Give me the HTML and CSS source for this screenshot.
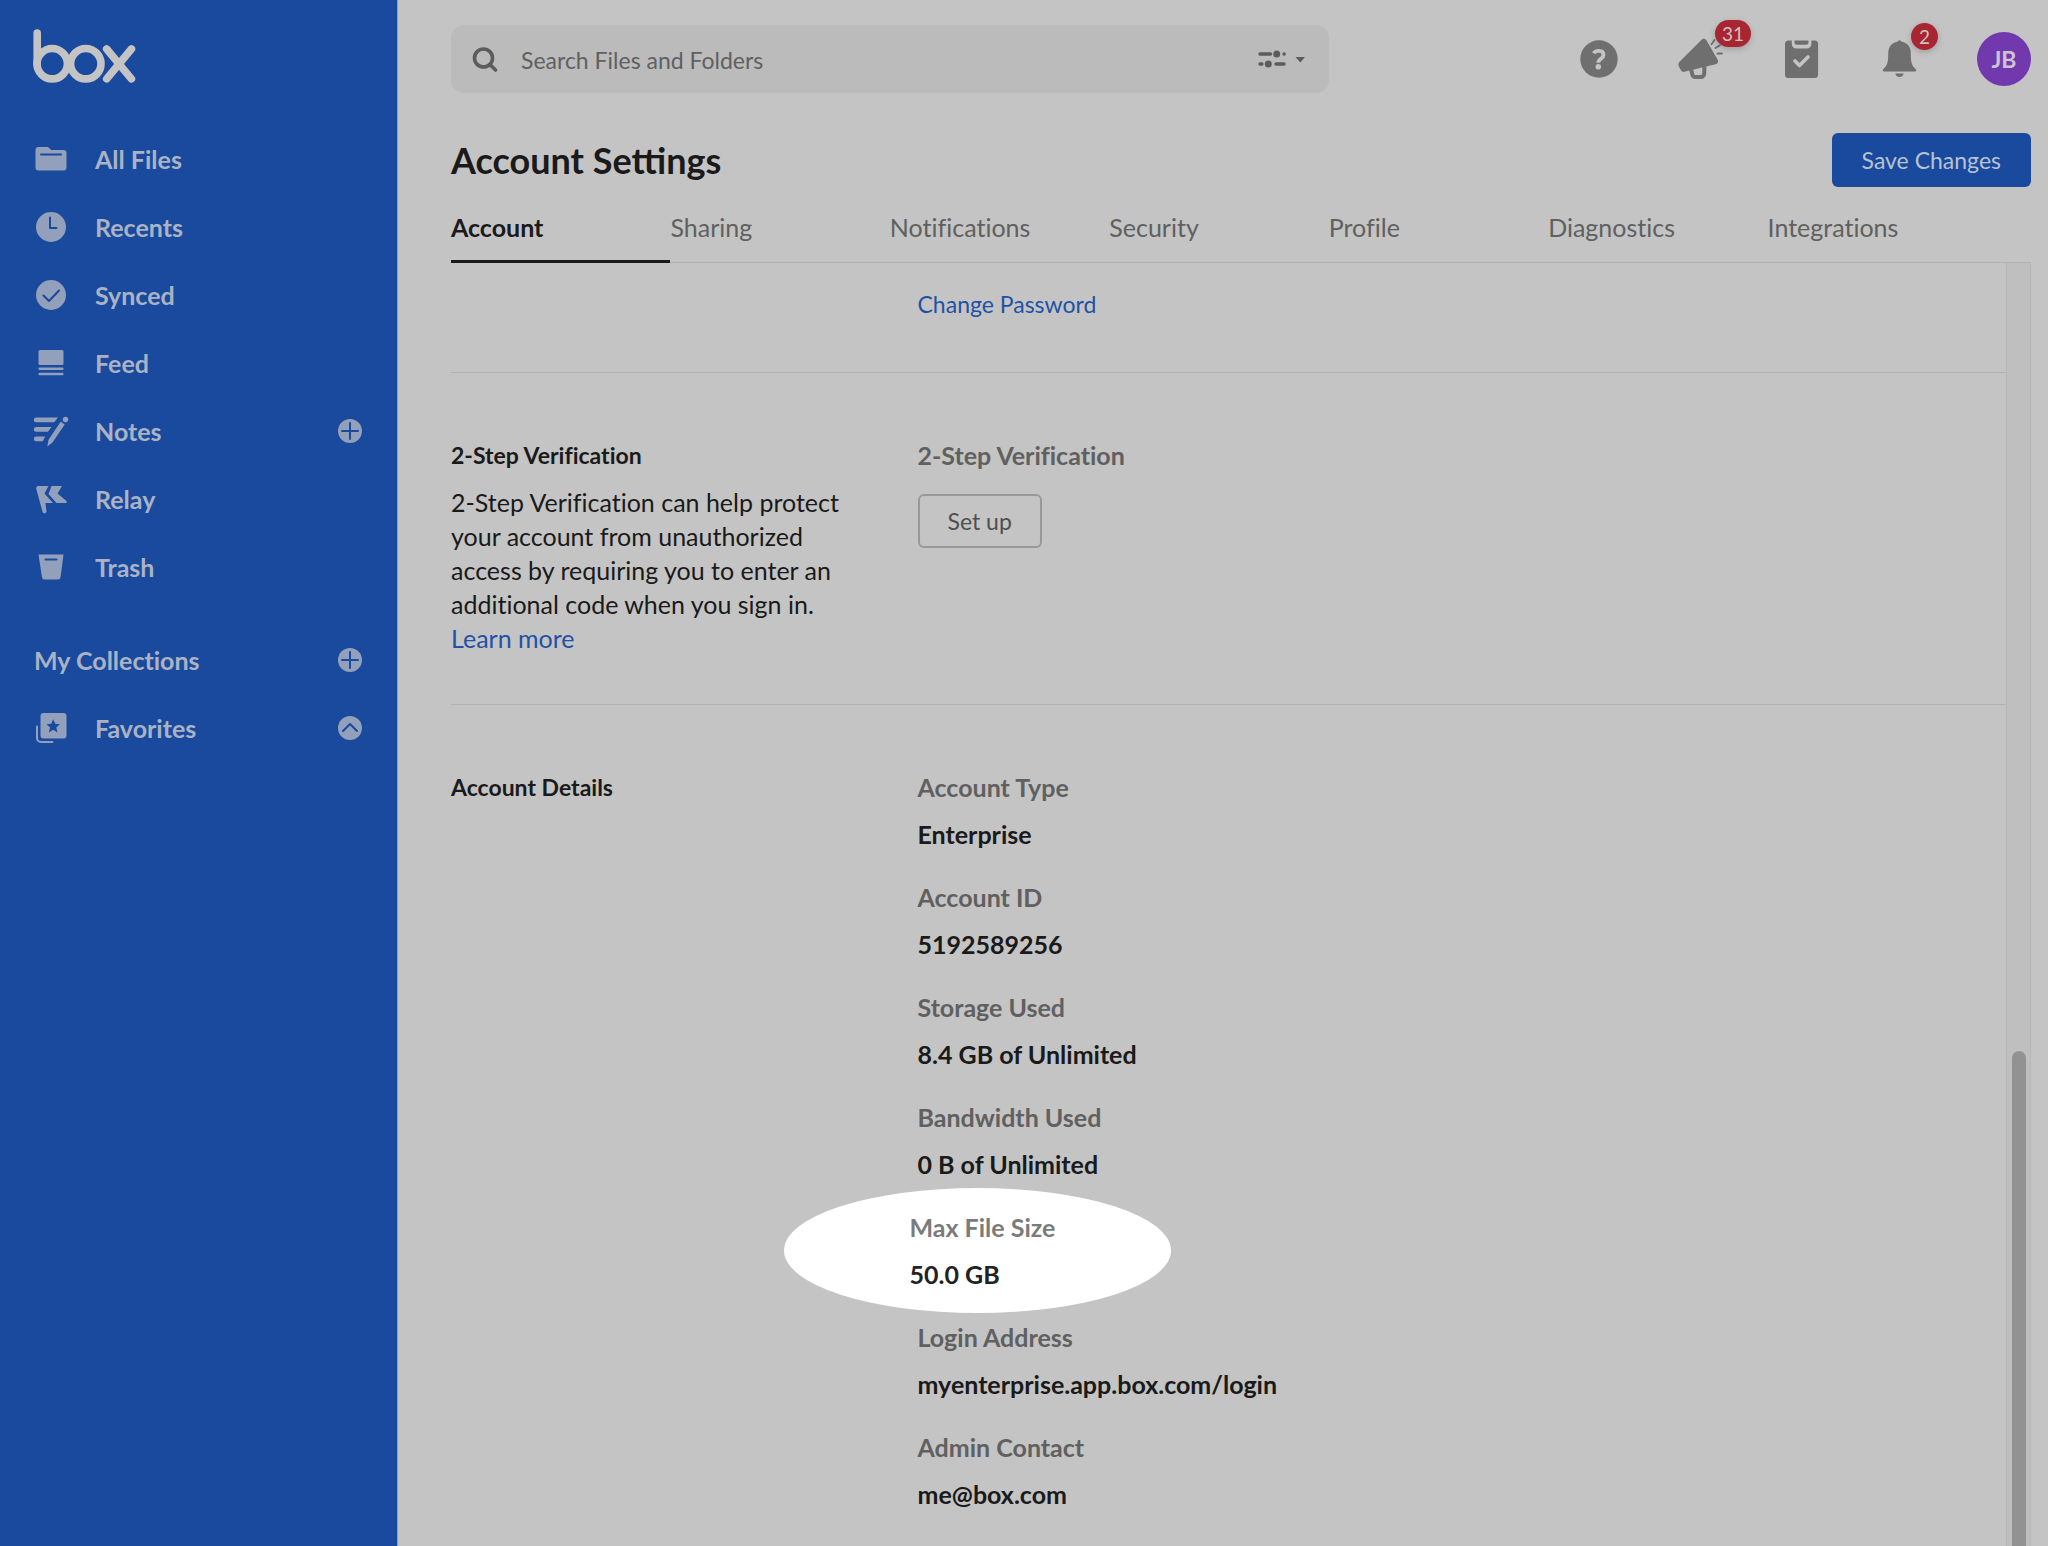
FILE: index.html
```html
<!DOCTYPE html>
<html lang="en">
<head>
<meta charset="utf-8">
<meta name="viewport" content="width=device-width, initial-scale=1">
<title>Account Settings | Box</title>
<link rel="stylesheet" href="styles.css">
</head>
<body>
<div class="app">
  <aside class="sidebar">
    <a class="logo" href="#" aria-label="Box home">
      <svg width="104" height="54" viewBox="33 29 104 54" fill="none" stroke="currentColor" stroke-width="7.6" stroke-linecap="round" stroke-linejoin="round">
        <path d="M37.2 33v31"/>
        <circle cx="52.2" cy="63.7" r="15.2"/>
        <circle cx="85.8" cy="63.7" r="15.2"/>
        <path d="M106.7 49l24.7 29.8M131.4 49l-24.7 29.8"/>
      </svg>
    </a>
    <nav class="nav" aria-label="Main">
      <a class="nav-item" href="#">
        <svg class="nav-icon" viewBox="0 0 36 36"><path fill="currentColor" d="M5.500 6H15l3.200 3H30.500a3 3 0 0 1 3 3V26.500a3 3 0 0 1-3 3h-25a3 3 0 0 1-3-3V9a3 3 0 0 1 3-3z"/><path class="cut" d="M8 13.500h20"/></svg>
        <span class="nav-label">All Files</span>
      </a>
      <a class="nav-item" href="#">
        <svg class="nav-icon" viewBox="0 0 36 36"><circle cx="18" cy="18" r="15" fill="currentColor"/><path class="cut" d="M17 8.500V19h6.500"/></svg>
        <span class="nav-label">Recents</span>
      </a>
      <a class="nav-item" href="#">
        <svg class="nav-icon" viewBox="0 0 36 36"><circle cx="18" cy="18" r="15" fill="currentColor"/><path class="cut" d="M10.500 18.500l5.500 5.500 10-10.500"/></svg>
        <span class="nav-label">Synced</span>
      </a>
      <a class="nav-item" href="#">
        <svg class="nav-icon" viewBox="0 0 36 36" fill="currentColor"><rect x="5.500" y="5" width="25" height="15" rx="1.500"/><rect x="5.500" y="22.500" width="25" height="2.600" rx="1"/><rect x="5.500" y="27.700" width="25" height="2.600" rx="1"/></svg>
        <span class="nav-label">Feed</span>
      </a>
      <div class="nav-item">
        <a class="nav-link" href="#">
          <svg class="nav-icon" viewBox="0 0 36 36" fill="currentColor"><path d="M3.200 4.500H25l-3.800 4.800h-18a2.400 2.400 0 0 1 0-4.800zM3.200 14h15.300l-3.500 4.800H3.200a2.400 2.400 0 0 1 0-4.800zM3.200 23.500h9l-2.500 4.800H3.200a2.400 2.400 0 0 1 0-4.800zM27.700 8.800l4 2.800-12.200 18-5.200 4 1.200-6.800z"/><circle cx="32.500" cy="6.500" r="2.700"/></svg>
          <span class="nav-label">Notes</span>
        </a>
        <button class="round-button" type="button" aria-label="New note"><svg viewBox="0 0 24 24"><circle cx="12" cy="12" r="12" fill="currentColor"/><path class="cut" d="M12 4v16M4 12h16"/></svg></button>
      </div>
      <a class="nav-item" href="#">
        <svg class="nav-icon" viewBox="0 0 36 36" fill="currentColor"><path d="M4.500 5H15.500l-4 7.500 8.500 9.500h-7.500l1 8.500a2 2 0 0 1-3.900.5L3 7z"/><path d="M18.500 5h10.500l-4.500 7.500 9 7.500v2H23.500L15.500 13z"/></svg>
        <span class="nav-label">Relay</span>
      </a>
      <a class="nav-item" href="#">
        <svg class="nav-icon" viewBox="0 0 36 36"><path fill="currentColor" d="M5.500 5.500h25l-3 23a2.500 2.500 0 0 1-2.500 2H11.500a2.500 2.500 0 0 1-2.500-2z"/><path class="cut" d="M12.500 10.500h11"/></svg>
        <span class="nav-label">Trash</span>
      </a>
    </nav>
    <section class="nav nav-collections" aria-label="Collections">
      <div class="nav-item">
        <h2 class="nav-heading">My Collections</h2>
        <button class="round-button" type="button" aria-label="New collection"><svg viewBox="0 0 24 24"><circle cx="12" cy="12" r="12" fill="currentColor"/><path class="cut" d="M12 4v16M4 12h16"/></svg></button>
      </div>
      <div class="nav-item">
        <a class="nav-link" href="#">
          <svg class="nav-icon" viewBox="0 0 36 36"><rect x="7.500" y="3" width="26" height="25.500" rx="3" fill="currentColor"/><path fill="none" stroke="currentColor" stroke-width="2" stroke-linecap="round" d="M4 16.500V28a4 4 0 0 0 4 4h11.500"/><path class="cut-fill" d="M20.200 9.200l2 4.500 4.700.5-3.600 3.200 1.200 5-4.300-2.600-4.300 2.600 1.200-5-3.600-3.200 4.700-.5z"/></svg>
          <span class="nav-label">Favorites</span>
        </a>
        <button class="round-button" type="button" aria-label="Collapse favorites"><svg viewBox="0 0 24 24"><circle cx="12" cy="12" r="12" fill="currentColor"/><path class="cut" d="M5 15l7-7 7 7"/></svg></button>
      </div>
    </section>
  </aside>

  <main class="main">
    <header class="topbar">
      <form class="search" role="search">
        <svg class="search-icon" viewBox="0 0 26 26" fill="none" stroke="currentColor" stroke-width="3.600"><circle cx="11.500" cy="12" r="9"/><path stroke-linecap="round" d="M18 18.500l5.500 5.500"/></svg>
        <input class="search-input" type="search" aria-label="Search Files and Folders" placeholder="Search Files and Folders">
        <button class="search-filter" type="button" aria-label="Search filters">
          <svg width="48" height="24" viewBox="0 0 48 24" fill="none" stroke="currentColor" stroke-width="3.400" stroke-linecap="round"><path d="M2 7h10.500M26 7h.2M2 17h2M18 17h8"/><g fill="currentColor" stroke="none"><circle cx="18.700" cy="7" r="3.500"/><circle cx="10.300" cy="17" r="3.500"/><path d="M37.500 10h9.500l-4.700 5.500z"/></g></svg>
        </button>
      </form>
      <div class="actions">
        <button class="icon-button" type="button" aria-label="Help">
          <svg viewBox="0 0 54 54"><circle cx="26" cy="27" r="18.700" fill="currentColor"/><path class="page-cut" stroke-width="3.900" stroke-linecap="butt" d="M20.700 21.300c1.700-3 9.800-4 9.800 1.500 0 4.200-5.200 3.700-5.200 8"/><circle class="page-fill" cx="25.300" cy="34.700" r="2.800"/></svg>
        </button>
        <button class="icon-button" type="button" aria-label="News, 31 new">
          <svg viewBox="0 0 54 54"><path fill="currentColor" d="M27.600 7.800a3 3 0 0 1 4.800.5l11.300 19.400a3 3 0 0 1-2.100 4.500L10.300 39.800a3.200 3.200 0 0 1-3.400-1.500L4.800 34.300a3.500 3.500 0 0 1 .5-4.200z"/><path fill="none" stroke="currentColor" stroke-width="4" d="M17.200 37.500l1.100 5a3.500 3.500 0 0 0 3.300 2.600h5.200a3.500 3.500 0 0 0 3.400-3.300l.2-8"/><path fill="none" stroke="currentColor" stroke-width="1.800" stroke-linecap="round" d="M37.500 12.200l3-4.200M41.500 16l4.500-2.700M43.500 21.500h4.500"/></svg>
          <span class="badge badge-wide">31</span>
        </button>
        <button class="icon-button" type="button" aria-label="Tasks">
          <svg viewBox="0 0 54 54"><path fill="currentColor" d="M13.500 8.500h3.300v3.500a4.500 4.500 0 0 0 4.500 4.500h10.600a4.500 4.500 0 0 0 4.500-4.500V8.500h3.200a3.500 3.500 0 0 1 3.500 3.500v30.500a3.500 3.500 0 0 1-3.500 3.500H13.500a3.500 3.500 0 0 1-3.500-3.500V12a3.500 3.500 0 0 1 3.500-3.500z"/><path fill="currentColor" d="M19.500 8.500h14v1.800a2.500 2.500 0 0 1-2.500 2.500h-9a2.500 2.500 0 0 1-2.500-2.500z"/><path class="page-cut" stroke-width="3.600" stroke-linecap="round" stroke-linejoin="round" d="M20 29l4.500 4.500 8.500-8.500"/></svg>
        </button>
        <button class="icon-button" type="button" aria-label="Notifications, 2 new">
          <svg viewBox="0 0 54 54" fill="currentColor"><path d="M23.500 8.300a3.500 3.500 0 0 1 2.300 1.500c6 1 9 5.500 9 12.200 0 8.500 1 11.500 4.900 15 1 1 .5 2.500-.7 2.500H8c-1.200 0-1.700-1.500-.7-2.500 3.900-3.500 4.900-6.500 4.900-15 0-6.700 3-11.200 9-12.200a3.500 3.500 0 0 1 2.300-1.500z"/><path d="M19.300 41.500h8.400a4.300 4.300 0 0 1-8.400 0z"/></svg>
          <span class="badge">2</span>
        </button>
        <button class="avatar" type="button" aria-label="Account menu">JB</button>
      </div>
    </header>

    <div class="title-row">
      <h1 class="title">Account Settings</h1>
      <button class="button button-primary" type="button">Save Changes</button>
    </div>

    <nav class="tabs" aria-label="Settings">
      <a class="tab tab-active" href="#" aria-current="page">Account</a>
      <a class="tab" href="#">Sharing</a>
      <a class="tab" href="#">Notifications</a>
      <a class="tab" href="#">Security</a>
      <a class="tab" href="#">Profile</a>
      <a class="tab" href="#">Diagnostics</a>
      <a class="tab" href="#">Integrations</a>
    </nav>

    <div class="pane">
      <div class="sections">
        <section class="section section-password">
          <div class="section-body"><a class="link link-action" href="#">Change Password</a></div>
        </section>
        <section class="section section-steps">
          <div class="section-info">
            <h2 class="section-title">2-Step Verification</h2>
            <p class="section-text">2-Step Verification can help protect your account from unauthorized access by requiring you to enter an additional code when you sign in. <a class="link" href="#">Learn more</a></p>
          </div>
          <div class="section-body">
            <h3 class="field-label">2-Step Verification</h3>
            <button class="button button-outline" type="button">Set up</button>
          </div>
        </section>
        <section class="section">
          <div class="section-info"><h2 class="section-title">Account Details</h2></div>
          <dl class="section-body details">
            <div class="detail"><dt class="field-label">Account Type</dt><dd class="field-value">Enterprise</dd></div>
            <div class="detail"><dt class="field-label">Account ID</dt><dd class="field-value">5192589256</dd></div>
            <div class="detail"><dt class="field-label">Storage Used</dt><dd class="field-value">8.4 GB of Unlimited</dd></div>
            <div class="detail"><dt class="field-label">Bandwidth Used</dt><dd class="field-value">0 B of Unlimited</dd></div>
            <div class="detail detail-spotlight"><dt class="field-label">Max File Size</dt><dd class="field-value">50.0 GB</dd></div>
            <div class="detail"><dt class="field-label">Login Address</dt><dd class="field-value">myenterprise.app.box.com/login</dd></div>
            <div class="detail"><dt class="field-label">Admin Contact</dt><dd class="field-value">me@box.com</dd></div>
          </dl>
        </section>
      </div>
      <div class="scroll-track" aria-hidden="true"><div class="scroll-thumb" style="height: 38.6%"></div></div>
    </div>
  </main>
</div>
</body>
</html>
```
FILE: styles.css
```css
:root {
  --page: #c4c4c4;
  --blue: #1a4a9d;
  --link: #1f52a6;
  --text: #1a1a1a;
  --muted: #606060;
  --line: #b2b2b2;
}

* { box-sizing: border-box; }

body {
  margin: 0;
  background: var(--page);
  color: var(--text);
  font: 25px/34px Lato, "Liberation Sans", sans-serif;
  font-variant-ligatures: none;
}

h1, h2, h3, p, dl, dd { margin: 0; }
a { color: inherit; text-decoration: none; }
svg { display: block; }

button {
  border: 0;
  padding: 0;
  background: none;
  color: inherit;
  font: inherit;
  cursor: pointer;
}

.app { display: flex; min-height: 100vh; }

/* Sidebar */
.sidebar {
  flex: 0 0 398px;
  padding: 29px 35px 0 33px;
  border-right: 1px solid #8b9cba;
  background: var(--blue);
  color: #aab3c5;
}
.logo { display: block; width: 104px; margin-bottom: 42px; color: var(--page); }
.nav-collections { margin-top: 25px; }
.nav-item { display: flex; align-items: center; height: 68px; }
.nav-link { display: flex; flex: 1; align-items: center; }
.nav-icon { flex: none; width: 36px; height: 36px; margin-right: 26px; color: #92a0bb; }
.nav-label { font-weight: 700; }
.nav-heading { flex: 1; padding-left: 1px; font-size: 25px; font-weight: 700; }
.round-button { width: 24px; height: 24px; color: #92a0bb; }
.cut { fill: none; stroke: var(--blue); stroke-width: 2; stroke-linecap: round; stroke-linejoin: round; }
.cut-fill { fill: var(--blue); }

/* Top bar */
.main { display: flex; flex: 1; flex-direction: column; min-width: 0; padding: 25px 17px 0 53px; }
.topbar { display: flex; align-items: center; justify-content: space-between; }
.search {
  display: flex;
  align-items: center;
  width: 878px;
  height: 68px;
  padding: 0 23px 0 21px;
  border-radius: 13px;
  background: #bbb;
  color: #5c5c5c;
}
.search-icon { flex: none; width: 26px; height: 26px; margin-right: 23px; }
.search-input {
  flex: 1;
  min-width: 0;
  padding: 2px 0 0;
  border: 0;
  outline: 0;
  background: none;
  color: var(--text);
  font: inherit;
  font-size: 23px;
}
.search-input::placeholder { color: var(--muted); opacity: 1; }
.actions { display: flex; gap: 47px; }
.icon-button { position: relative; width: 54px; height: 54px; color: #6f6f6f; }
.page-cut { fill: none; stroke: var(--page); }
.page-fill { fill: var(--page); }
.badge {
  position: absolute;
  top: -9px;
  left: 35px;
  width: 27px;
  height: 27px;
  border-radius: 14px;
  background: #a82631;
  box-shadow: 0 2px 6px rgba(0, 0, 0, .2);
  color: #d0c0c1;
  font-size: 19px;
  line-height: 27px;
  text-align: center;
}
.badge-wide { top: -12px; left: 41px; width: 36px; }
.avatar {
  width: 54px;
  height: 54px;
  border-radius: 50%;
  background: #7238ae;
  color: #cdc4d3;
  font-size: 23px;
  font-weight: 700;
}

/* Title and tabs */
.title-row { display: flex; align-items: center; justify-content: space-between; margin-top: 40px; }
.title { font-size: 36px; line-height: 54px; font-variant-ligatures: normal; }
.button { height: 54px; border-radius: 6px; padding: 0 30px; font-size: 23px; }
.button-primary { background: var(--blue); color: #b9c2d1; }
.button-outline { border: 2px solid #999; padding: 0 28px; color: #4f4f4f; }
.tabs {
  display: grid;
  grid-template-columns: repeat(7, 1fr);
  margin-top: 16px;
  padding-right: 44px;
  border-bottom: 1px solid var(--line);
  color: var(--muted);
}
.tab { padding: 7px 0 16px; }
.tab-active { margin-bottom: -1px; border-bottom: 3px solid var(--text); color: var(--text); font-weight: 700; }

/* Settings pane */
.pane { display: flex; flex: 1; }
.sections { flex: 1; }
.section { display: grid; grid-template-columns: 30% 1fr; padding: 65px 0 35px; }
.section + .section { border-top: 1px solid var(--line); }
.section-password { padding: 23px 0 51px; }
.section-steps { padding-bottom: 49px; }
.section-info { padding-right: 66px; }
.section-body { grid-column: 2; }
.section-title { font-size: 23px; line-height: 34px; }
.section-text { margin-top: 13px; }
.link { color: var(--link); }
.link-action { display: inline-block; font-size: 23px; }
.field-label { color: var(--muted); font-size: 25px; font-weight: 700; }
.field-value { margin-top: 13px; font-weight: 700; }
.button-outline { margin-top: 22px; }
.details { display: grid; gap: 29px; }
.detail-spotlight { position: relative; isolation: isolate; margin-left: -8px; }
.detail-spotlight::before {
  content: "";
  position: absolute;
  z-index: -1;
  top: -22px;
  left: -126px;
  width: 387px;
  height: 125px;
  border-radius: 50%;
  background: #fff;
}
.detail-spotlight .field-label { color: #7b7b7b; }
.detail-spotlight .field-value { color: #222; }
.scroll-track {
  display: flex;
  flex: 0 0 25px;
  align-items: flex-end;
  justify-content: center;
  border: solid #b6b6b6;
  border-width: 0 1px;
  background: #bfbfbf;
}
.scroll-thumb { width: 14px; border-radius: 7px 7px 0 0; background: #929292; }
```
